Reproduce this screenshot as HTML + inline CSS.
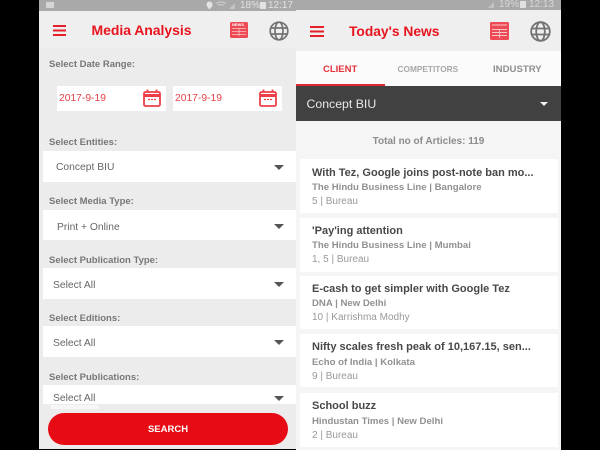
<!DOCTYPE html>
<html><head><meta charset="utf-8">
<style>
html,body{margin:0;padding:0;background:#000;}
#r{position:relative;width:600px;height:450px;overflow:hidden;background:#000;font-family:"Liberation Sans",sans-serif;filter:blur(.35px);}
#r div,#r svg{position:absolute;}
.t{white-space:nowrap;line-height:1;}
.lab{left:49px;font-size:9.5px;font-weight:bold;color:#777;}
.sel{left:43px;width:253px;background:#fff;}
.v{font-size:10.3px;color:#666;}
.arr{width:0;height:0;border-left:5px solid transparent;border-right:5px solid transparent;border-top:5px solid #555;left:274px;}
.card{left:300px;width:258px;background:#fff;}
.h{left:312px;font-size:11px;font-weight:bold;color:#484848;}
.s{left:312px;font-size:9.6px;font-weight:bold;color:#909090;}
.m{left:312px;font-size:10px;color:#999;}
.d{font-size:10.3px;color:#e8414a;}
</style></head><body>
<div id="r">
<!-- LEFT -->
<div style="left:39px;top:0;width:257px;height:449px;background:#ececec"></div>
<div style="left:39px;top:0;width:257px;height:11px;background:#a9a9a9"></div>
<div style="left:39px;top:11px;width:257px;height:37px;background:#efefef"></div>
<div style="left:46px;top:2px;width:8px;height:6px;background:#d5d5d5"></div>
<svg style="left:205px;top:1px" width="9" height="9" viewBox="0 0 9 9"><path d="M4.500 .5a3 3 0 0 1 3 3c0 2-3 5-3 5s-3-3-3-5a3 3 0 0 1 3-3z" fill="#e4e4e4"/></svg>
<svg style="left:215px;top:1px" width="22" height="9" viewBox="0 0 22 9"><path d="M1 2.500q5-3 10 0M3 4.500q3-2 6 0" stroke="#c8c8c8" stroke-width="1.200" fill="none"/><path d="M14 8l6-6v6z" fill="#c4c4c4"/></svg>
<div class="t" style="left:240px;top:1px;font-size:10px;color:#e2e2e2">18%</div>
<div style="left:260px;top:2px;width:6px;height:7px;background:#e2e2e2"></div>
<div class="t" style="left:268px;top:1px;font-size:10px;color:#e2e2e2">12:17</div>
<svg style="left:52px;top:24px" width="15" height="12" viewBox="0 0 15 12"><path d="M1 2h13M1 6.500h13M1 11h13" stroke="#e5202a" stroke-width="2"/></svg>
<div class="t" style="left:91.500px;top:23px;font-size:14px;font-weight:bold;color:#e8141e;letter-spacing:-.05px">Media Analysis</div>
<svg style="left:230px;top:22px" width="18" height="16" viewBox="0 0 18 16"><rect width="18" height="16" rx="1.500" fill="#ee4a55"/><path d="M2 6.500h14M2 9.500h14M2 12.500h14M9 6v8" stroke="#f8c5c8" stroke-width=".8"/></svg>
<div class="t" style="left:232px;top:23px;font-size:4px;font-weight:bold;color:#fff">NEWS</div>
<svg style="left:269px;top:21px" width="20" height="20" viewBox="0 0 20 20" fill="none" stroke="#737373" stroke-width="1.700"><circle cx="10" cy="10" r="8.800"/><ellipse cx="10" cy="10" rx="4" ry="8.800"/><path d="M1.500 7h17M1.500 13h17"/></svg>
<div class="t lab" style="top:60px">Select Date Range:</div>
<div style="left:57px;top:86px;width:109px;height:25px;background:#fff"></div>
<div style="left:173px;top:86px;width:109px;height:25px;background:#fff"></div>
<div class="t d" style="left:59px;top:94px">2017-9-19</div>
<div class="t d" style="left:175px;top:94px">2017-9-19</div>
<svg style="left:143px;top:89px" width="18" height="18" viewBox="0 0 18 18" fill="none" stroke="#ee3f49" stroke-width="1.800"><rect x="1" y="3" width="16" height="14" rx="1.500"/><path d="M1 6.500h16" stroke-width="3"/><path d="M4.500 .5v3M13.500 .5v3" stroke-width="1.800"/><path d="M5 10.500h2M8 10.500h2M11 10.500h2" stroke-width="1.300"/></svg>
<svg style="left:259px;top:89px" width="18" height="18" viewBox="0 0 18 18" fill="none" stroke="#ee3f49" stroke-width="1.800"><rect x="1" y="3" width="16" height="14" rx="1.500"/><path d="M1 6.500h16" stroke-width="3"/><path d="M4.500 .5v3M13.500 .5v3" stroke-width="1.800"/><path d="M5 10.500h2M8 10.500h2M11 10.500h2" stroke-width="1.300"/></svg>

<div class="t lab" style="top:138px">Select Entities:</div>
<div class="sel" style="top:151px;height:31px"></div>
<div class="t v" style="left:56px;top:163px">Concept BIU</div>
<div class="arr" style="top:165px"></div>
<div class="t lab" style="top:197px">Select Media Type:</div>
<div class="sel" style="top:210px;height:30px"></div>
<div class="t v" style="left:57px;top:223px">Print + Online</div>
<div class="arr" style="top:224px"></div>
<div class="t lab" style="top:256px">Select Publication Type:</div>
<div class="sel" style="top:268px;height:31px"></div>
<div class="t v" style="left:53px;top:281px">Select All</div>
<div class="arr" style="top:282px"></div>
<div class="t lab" style="top:314px">Select Editions:</div>
<div class="sel" style="top:326px;height:31px"></div>
<div class="t v" style="left:53px;top:339px">Select All</div>
<div class="arr" style="top:340px"></div>
<div class="t lab" style="top:373px">Select Publications:</div>
<div class="sel" style="top:385px;height:20px"></div>
<div class="t v" style="left:53px;top:394px">Select All</div>
<div class="arr" style="top:396px"></div>
<div style="left:39px;top:404px;width:257px;height:45px;background:#ececec"></div>
<div style="left:51px;top:405px;width:48px;height:4px;background:#f6f6f6"></div>
<div style="left:48px;top:413px;width:240px;height:32px;border-radius:16px;background:#e60b14"></div>
<div class="t" style="left:48px;top:425px;width:240px;text-align:center;font-size:9.500px;font-weight:bold;color:#fff">SEARCH</div>

<!-- RIGHT -->
<div style="left:296px;top:0;width:265px;height:450px;background:#f5f5f5"></div>
<div style="left:296px;top:0;width:265px;height:10px;background:#a9a9a9"></div>
<div style="left:296px;top:10px;width:265px;height:41px;background:#efefef"></div>
<svg style="left:484px;top:0" width="12" height="9" viewBox="0 0 12 9"><path d="M4 8l6-6v6z" fill="#c4c4c4"/></svg>
<div class="t" style="left:499px;top:0;font-size:10px;color:#d8d8d8">19%</div>
<div style="left:520px;top:1px;width:6px;height:7px;background:#e0e0e0"></div>
<div class="t" style="left:529px;top:0;font-size:10px;color:#d8d8d8">12:13</div>
<svg style="left:309px;top:25px" width="16" height="12" viewBox="0 0 16 12"><path d="M1 2h14M1 6.500h14M1 11h14" stroke="#e5202a" stroke-width="2"/></svg>
<div class="t" style="left:349px;top:25px;font-size:13.800px;font-weight:bold;color:#e8141e">Today's News</div>
<svg style="left:490px;top:22px" width="19" height="18" viewBox="0 0 19 18"><rect width="19" height="18" rx="1.500" fill="#ee4a55"/><path d="M2 3h15M2 7.500h15M2 10.500h15M2 13.500h15M9.500 7v9" stroke="#f8c5c8" stroke-width=".9"/></svg>
<svg style="left:530px;top:21px" width="21" height="21" viewBox="0 0 21 21" fill="none" stroke="#737373" stroke-width="1.800"><circle cx="10.500" cy="10.500" r="9.300"/><ellipse cx="10.500" cy="10.500" rx="4.300" ry="9.300"/><path d="M1.500 7.500h18M1.500 13.500h18"/></svg>
<div style="left:296px;top:51px;width:265px;height:35px;background:#fbfbfb"></div>
<div class="t" style="left:323px;top:65px;font-size:9.500px;font-weight:bold;color:#e5303a">CLIENT</div>
<div class="t" style="left:397.500px;top:65px;font-size:8.300px;font-weight:bold;color:#a8a8a8">COMPETITORS</div>
<div class="t" style="left:493px;top:65px;font-size:9.600px;font-weight:bold;color:#8e8e8e">INDUSTRY</div>
<div style="left:296px;top:84px;width:89px;height:2px;background:#dd2a33"></div>
<div style="left:296px;top:86px;width:265px;height:35px;background:#414141"></div>
<div class="t" style="left:306.500px;top:98px;font-size:12.300px;color:#e8e8e8">Concept BIU</div>
<div style="left:540px;top:102px;width:0;height:0;border-left:4px solid transparent;border-right:4px solid transparent;border-top:4px solid #f0f0f0"></div>
<div class="t" style="left:296px;top:137px;width:265px;text-align:center;font-size:10px;font-weight:bold;color:#8c8c8c">Total no of Articles: 119</div>

<div class="card" style="top:159px;height:54px"></div>
<div class="t h" style="top:168px">With Tez, Google joins post-note ban mo...</div>
<div class="t s" style="top:183px">The Hindu Business Line | Bangalore</div>
<div class="t m" style="top:197px">5 | Bureau</div>

<div class="card" style="top:218px;height:54px"></div>
<div class="t h" style="top:226px">'Pay'ing attention</div>
<div class="t s" style="top:241px">The Hindu Business Line | Mumbai</div>
<div class="t m" style="top:255px">1, 5 | Bureau</div>

<div class="card" style="top:276px;height:53px"></div>
<div class="t h" style="top:284px">E-cash to get simpler with Google Tez</div>
<div class="t s" style="top:299px">DNA | New Delhi</div>
<div class="t m" style="top:313px">10 | Karrishma Modhy</div>

<div class="card" style="top:334px;height:53px"></div>
<div class="t h" style="top:342px">Nifty scales fresh peak of 10,167.15, sen...</div>
<div class="t s" style="top:358px">Echo of India | Kolkata</div>
<div class="t m" style="top:372px">9 | Bureau</div>

<div class="card" style="top:393px;height:54px"></div>
<div class="t h" style="top:401px">School buzz</div>
<div class="t s" style="top:417px">Hindustan Times | New Delhi</div>
<div class="t m" style="top:431px">2 | Bureau</div>
</div>
</body></html>
